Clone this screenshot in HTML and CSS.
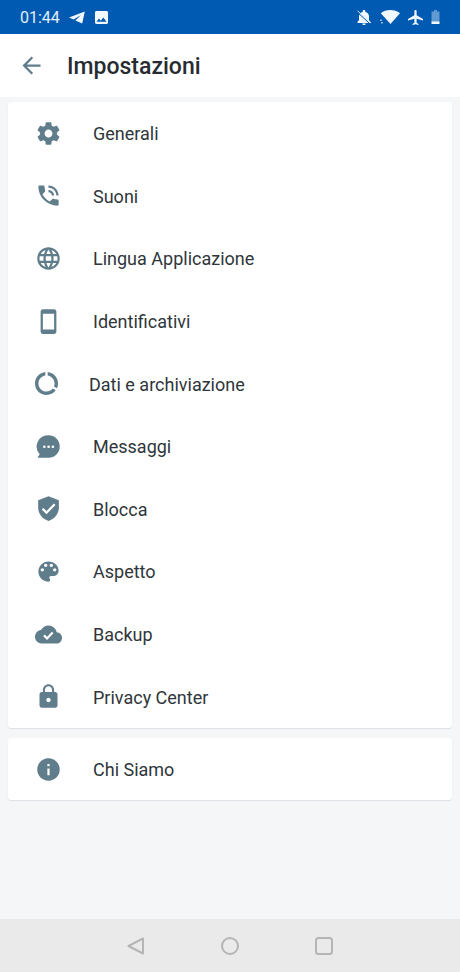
FILE: index.html
```html
<!DOCTYPE html>
<html lang="it">
<head>
<meta charset="utf-8">
<meta name="viewport" content="width=device-width, initial-scale=1">
<title>Impostazioni</title>
<link rel="stylesheet" href="styles.css">
</head>
<body>
<div class="status">
  <span class="clock">01:44</span>
  <svg class="status-plane" viewBox="0 0 16 12" aria-hidden="true"><path d="M15.8 0 0 6l4.600 2L12 3.500 6.400 9l6.800 3z"/></svg>
  <svg class="status-photo" viewBox="3 3 18 18" aria-hidden="true"><path d="M21 19V5c0-1.100-.9-2-2-2H5c-1.100 0-2 .9-2 2v14c0 1.100.9 2 2 2h14c1.100 0 2-.9 2-2zM8.500 13.500l2.500 3.010L14.500 12l4.500 6H5l3.500-4.500z"/></svg>
  <div class="status-right">
    <svg class="status-bell" viewBox="0 0 16 15" aria-hidden="true"><path d="M1.500 13v-1.300L3 10.200V6.300C3 4 4.400 2.400 6.700 1.900V1.200a1.300 1.300 0 0 1 2.600 0v.7C11.600 2.400 13 4 13 6.300v3.900l1.500 1.500V13zM6.300 13.500h3.400a1.600 1.600 0 0 1-3.400 0z"/><path class="slash-gap" d="m.8 1.800 13.400 12.200"/><path class="slash" d="m1.500.8 13.400 12.200"/></svg>
    <svg class="status-wifi" viewBox="0 0 20 14" aria-hidden="true"><path d="M10.500 14 .8 3.300C6-1.100 14.500-1.100 20 3.300z"/><path d="M0 9.500h2v1.500H0zm1 2.500h2v1.500H1z" opacity=".6"/></svg>
    <svg class="status-air" viewBox="2 2 20 20" aria-hidden="true"><path d="M22 16v-2l-8.500-5V3.500C13.500 2.670 12.830 2 12 2s-1.500.67-1.500 1.500V9L2 14v2l8.500-2.500V19L8 20.500V22l4-1 4 1v-1.500L13.500 19v-5.500z"/></svg>
    <svg class="status-battery" viewBox="0 0 9 14" aria-hidden="true"><path d="M3 0h3v1.500h2.500V12h-8V1.500H3z" opacity=".4"/><path d="M.5 11.500h8V14h-8z"/></svg>
  </div>
</div>

<header class="appbar">
  <button class="back" type="button" aria-label="Indietro"><svg class="icon" viewBox="0 0 24 24" aria-hidden="true"><path d="M20 11H7.830l5.590-5.590L12 4l-8 8 8 8 1.410-1.410L7.830 13H20v-2z"/></svg></button>
  <h1>Impostazioni</h1>
</header>

<main>
  <ul class="card card-settings">
    <li><a class="row" href="#generali"><svg class="icon" viewBox="0 0 24 24" aria-hidden="true"><path d="M19.430 12.980c.04-.32.07-.64.07-.98s-.03-.66-.07-.98l2.110-1.650c.19-.15.24-.42.12-.64l-2-3.460c-.12-.22-.39-.3-.61-.22l-2.490 1c-.52-.4-1.080-.73-1.690-.98l-.38-2.650C14.460 2.180 14.250 2 14 2h-4c-.25 0-.46.18-.49.42l-.38 2.650c-.61.25-1.170.59-1.690.98l-2.490-1c-.23-.09-.49 0-.61.22l-2 3.460c-.13.22-.07.49.12.64l2.110 1.650c-.04.32-.07.65-.07.98s.03.66.07.98l-2.110 1.650c-.19.15-.24.42-.12.64l2 3.460c.12.22.39.3.61.22l2.490-1c.52.4 1.080.73 1.690.98l.38 2.650c.03.24.24.42.49.42h4c.25 0 .46-.18.49-.42l.38-2.650c.61-.25 1.170-.59 1.690-.98l2.490 1c.23.09.49 0 .61-.22l2-3.460c.12-.22.07-.49-.12-.64l-2.110-1.650zM12 15.500c-1.930 0-3.500-1.570-3.500-3.500s1.570-3.500 3.500-3.500 3.500 1.570 3.500 3.500-1.570 3.500-3.500 3.500z"/></svg><span class="label">Generali</span></a></li>
    <li><a class="row" href="#suoni"><svg class="icon" viewBox="0 0 24 24" aria-hidden="true"><path d="M20 15.500c-1.250 0-2.450-.2-3.570-.57-.1-.03-.21-.05-.31-.05-.26 0-.51.1-.71.29l-2.200 2.200c-2.830-1.440-5.150-3.750-6.590-6.590l2.200-2.200c.28-.28.36-.67.25-1.020C8.700 6.450 8.500 5.250 8.500 4c0-.55-.45-1-1-1H4c-.55 0-1 .45-1 1 0 9.390 7.610 17 17 17 .55 0 1-.45 1-1v-3.500c0-.55-.45-1-1-1zM19 12h2c0-4.970-4.030-9-9-9v2c3.870 0 7 3.130 7 7zm-4 0h2c0-2.760-2.240-5-5-5v2c1.660 0 3 1.340 3 3z"/></svg><span class="label">Suoni</span></a></li>
    <li><a class="row" href="#lingua"><svg class="icon" viewBox="0 0 24 24" aria-hidden="true"><path d="M11.990 2C6.470 2 2 6.480 2 12s4.470 10 9.990 10C17.520 22 22 17.520 22 12S17.520 2 11.990 2zm6.930 6h-2.950c-.32-1.250-.78-2.450-1.380-3.560 1.840.63 3.370 1.910 4.330 3.560zM12 4.040c.83 1.200 1.480 2.530 1.910 3.960h-3.820c.43-1.430 1.080-2.760 1.910-3.960zM4.260 14C4.100 13.360 4 12.690 4 12s.1-1.360.26-2h3.380c-.08.66-.14 1.320-.14 2s.06 1.340.14 2H4.260zm.82 2h2.950c.32 1.250.78 2.450 1.380 3.560-1.840-.63-3.370-1.900-4.330-3.560zm2.950-8H5.080c.96-1.660 2.490-2.930 4.330-3.560C8.810 5.550 8.350 6.750 8.030 8zM12 19.960c-.83-1.200-1.480-2.530-1.910-3.960h3.820c-.43 1.430-1.080 2.760-1.910 3.960zM14.340 14H9.660c-.09-.66-.16-1.320-.16-2s.07-1.350.16-2h4.680c.09.65.16 1.320.16 2s-.07 1.340-.16 2zm.25 5.560c.6-1.110 1.060-2.310 1.380-3.560h2.950c-.96 1.650-2.490 2.930-4.330 3.560zM16.360 14c.08-.66.14-1.320.14-2s-.06-1.340-.14-2h3.380c.16.64.26 1.310.26 2s-.1 1.360-.26 2h-3.380z"/></svg><span class="label">Lingua Applicazione</span></a></li>
    <li><a class="row" href="#identificativi"><svg class="icon" viewBox="0 0 24 24" aria-hidden="true"><path d="M17 1.010L7 1c-1.100 0-2 .9-2 2v18c0 1.100.9 2 2 2h10c1.100 0 2-.9 2-2V3c0-1.100-.9-1.990-2-1.990zM17 19H7V5h10v14z"/></svg><span class="label">Identificativi</span></a></li>
    <li><a class="row" href="#dati"><svg class="icon icon-compact" viewBox="2 2 20 20" aria-hidden="true"><path d="M13 2.050v3.030c3.390.49 6 3.390 6 6.920 0 .9-.18 1.750-.48 2.540l2.600 1.530c.56-1.240.88-2.620.88-4.070 0-5.180-3.950-9.450-9-9.950zM12 19c-3.870 0-7-3.130-7-7 0-3.530 2.610-6.430 6-6.920V2.050c-5.060.5-9 4.760-9 9.950 0 5.520 4.470 10 9.990 10 3.310 0 6.240-1.610 8.060-4.090l-2.600-1.530C16.170 17.980 14.210 19 12 19z"/></svg><span class="label">Dati e archiviazione</span></a></li>
    <li><a class="row" href="#messaggi"><svg class="icon" viewBox="0 0 24 24" aria-hidden="true"><path fill-rule="evenodd" d="M12 2a10 10 0 1 1 0 20H3.200c-.7 0-.9-.5-.5-1l1.500-2.200A10 10 0 0 1 12 2zM8.300 11a1.200 1.200 0 1 0 0 2.400 1.200 1.200 0 0 0 0-2.400zm3.800 0a1.200 1.200 0 1 0 0 2.400 1.200 1.200 0 0 0 0-2.400zm3.800 0a1.200 1.200 0 1 0 0 2.400 1.200 1.200 0 0 0 0-2.400z"/></svg><span class="label">Messaggi</span></a></li>
    <li><a class="row" href="#blocca"><svg class="icon" viewBox="0 0 24 24" aria-hidden="true"><path d="M12 1 2.800 4.700v6.500c0 5.400 3.900 10.400 9.200 11.800 5.300-1.400 9.200-6.400 9.200-11.800V4.700z"/><path class="tick" d="m6.700 12.200 3.500 3.500 7.300-7.500"/></svg><span class="label">Blocca</span></a></li>
    <li><a class="row" href="#aspetto"><svg class="icon" viewBox="0 0 24 24" aria-hidden="true"><path d="M12 3c-4.970 0-9 4.030-9 9s4.030 9 9 9c.83 0 1.500-.67 1.500-1.500 0-.39-.15-.74-.39-1.010-.23-.26-.38-.61-.38-.99 0-.83.67-1.500 1.500-1.500H16c2.760 0 5-2.240 5-5 0-4.420-4.030-8-9-8zm-5.500 9c-.83 0-1.500-.67-1.500-1.500S5.670 9 6.500 9 8 9.670 8 10.500 7.330 12 6.500 12zm3-4C8.670 8 8 7.330 8 6.500S8.670 5 9.500 5s1.500.67 1.500 1.500S10.330 8 9.500 8zm5 0c-.83 0-1.500-.67-1.500-1.500S13.670 5 14.500 5s1.500.67 1.500 1.500S15.330 8 14.500 8zm3 4c-.83 0-1.500-.67-1.500-1.500S16.670 9 17.500 9s1.500.67 1.500 1.500-.67 1.500-1.500 1.500z"/></svg><span class="label">Aspetto</span></a></li>
    <li><a class="row" href="#backup"><svg class="icon" viewBox="0 0 24 24" aria-hidden="true"><path d="M19.350 10.040C18.670 6.590 15.640 4 12 4 9.110 4 6.600 5.640 5.350 8.040 2.340 8.360 0 10.910 0 14c0 3.310 2.690 6 6 6h13c2.760 0 5-2.240 5-5 0-2.640-2.050-4.780-4.650-4.960z"/><path class="tick" d="m8 12.800 2.700 2.700 5-5.200"/></svg><span class="label">Backup</span></a></li>
    <li><a class="row" href="#privacy"><svg class="icon" viewBox="0 0 24 24" aria-hidden="true"><path d="M18 8h-1V6c0-2.760-2.240-5-5-5S7 3.240 7 6v2H6c-1.100 0-2 .9-2 2v10c0 1.100.9 2 2 2h12c1.100 0 2-.9 2-2V10c0-1.100-.9-2-2-2zm-6 9c-1.100 0-2-.9-2-2s.9-2 2-2 2 .9 2 2-.9 2-2 2zm3.100-9H8.900V6c0-1.710 1.390-3.100 3.100-3.100 1.710 0 3.100 1.390 3.100 3.100v2z"/></svg><span class="label">Privacy Center</span></a></li>
  </ul>
  <ul class="card">
    <li><a class="row" href="#chi-siamo"><svg class="icon" viewBox="0 0 24 24" aria-hidden="true"><path d="M12 2C6.480 2 2 6.480 2 12s4.480 10 10 10 10-4.480 10-10S17.520 2 12 2zm1 15h-2v-6h2v6zm0-8h-2V7h2v2z"/></svg><span class="label">Chi Siamo</span></a></li>
  </ul>
</main>

<nav class="sysnav" aria-label="Sistema">
  <button type="button" aria-label="Indietro"><svg viewBox="0 0 20 20" aria-hidden="true"><path d="M17 2.500v15L2.500 10z"/></svg></button>
  <button type="button" aria-label="Home"><svg viewBox="0 0 20 20" aria-hidden="true"><circle cx="10" cy="10" r="8"/></svg></button>
  <button type="button" aria-label="Recenti"><svg viewBox="0 0 20 20" aria-hidden="true"><rect x="2" y="2" width="16" height="16" rx="2.500"/></svg></button>
</nav>
</body>
</html>
```
FILE: styles.css
```css
* {
  box-sizing: border-box;
}

body {
  margin: 0;
  min-height: 100vh;
  display: flex;
  flex-direction: column;
  background: #f4f6f8;
  color: #2f363b;
  font: 18px/24px Roboto, "Liberation Sans", sans-serif;
}

button {
  padding: 0;
  border: 0;
  background: none;
  cursor: pointer;
}

svg {
  display: block;
  flex: none;
}

.status {
  display: flex;
  align-items: center;
  height: 34px;
  padding: 0 20px;
  background: #005ab2;
  color: #e2eefa;
  fill: #f2f8ff;
  font-size: 16px;
}

.clock {
  margin-right: 9px;
  padding-top: 2px;
}

.status-plane {
  width: 16px;
  height: 13px;
  margin-right: 10px;
}

.status-photo {
  width: 13px;
  height: 13px;
}

.status-right {
  display: flex;
  align-items: center;
  gap: 8px;
  margin-left: auto;
}

.status-bell {
  width: 16px;
  height: 15px;
}

.status-wifi {
  width: 20px;
  height: 14px;
}

.status-air {
  width: 15px;
  height: 15px;
}

.status-battery {
  width: 9px;
  height: 14px;
}

.slash,
.slash-gap {
  stroke: #d5e6f7;
  stroke-width: 1;
}

.slash-gap {
  stroke: #005ab2;
}

.appbar {
  display: flex;
  align-items: center;
  gap: 22px;
  height: 63px;
  padding: 0 18px;
  background: #fff;
}

h1 {
  margin: 0;
  padding-top: 2px;
  color: #262c31;
  font-size: 23px;
  font-weight: 500;
  line-height: 32px;
}

.icon {
  width: 27px;
  height: 27px;
  fill: #607d8b;
}

.icon-compact {
  width: 23px;
  height: 23px;
}

.tick {
  fill: none;
  stroke: #fff;
  stroke-width: 2;
}

main {
  flex: 1;
  display: flex;
  flex-direction: column;
  gap: 10px;
  padding: 5px 8px;
}

.card {
  display: grid;
  grid-auto-rows: 1fr;
  min-height: 62px;
  margin: 0;
  padding: 0;
  list-style: none;
  background: #fff;
  border-radius: 3px;
  box-shadow: 0 1px 1px #dde1e5;
}

.card-settings {
  min-height: 626px;
}

.row {
  display: flex;
  align-items: center;
  gap: 31px;
  height: 100%;
  padding: 0 27px;
  color: inherit;
  text-decoration: none;
}

.label {
  padding-top: 2px;
}

.sysnav {
  display: flex;
  justify-content: center;
  height: 53px;
  background: #eaeaea;
}

.sysnav button {
  display: grid;
  place-items: center;
  width: 94px;
}

.sysnav svg {
  width: 20px;
  height: 20px;
  fill: none;
  stroke: #b5b5b5;
  stroke-width: 2;
  stroke-linejoin: round;
}
```
